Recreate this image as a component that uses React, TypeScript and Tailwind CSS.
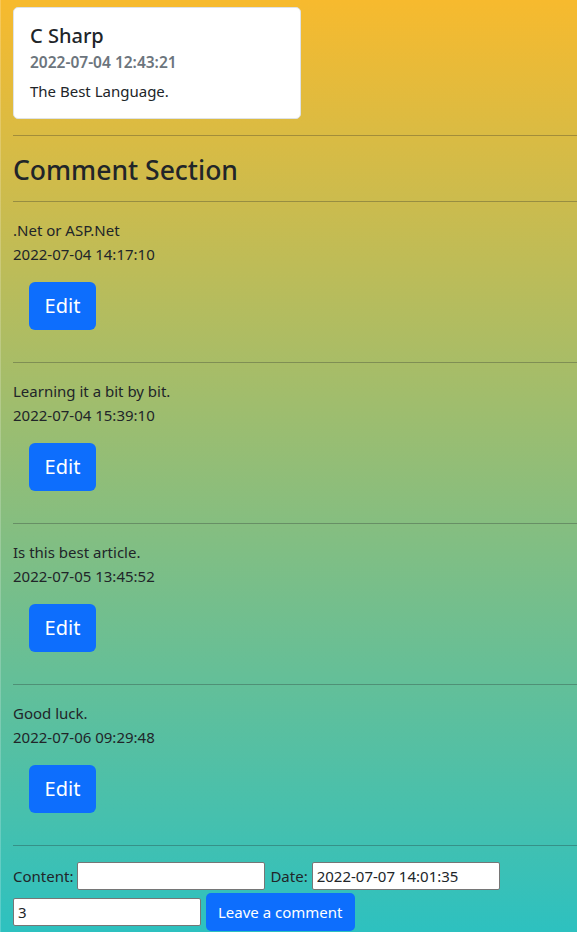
import React from 'react';

const comments = [
  { text: '.Net or ASP.Net', date: '2022-07-04 14:17:10' },
  { text: 'Learning it a bit by bit.', date: '2022-07-04 15:39:10' },
  { text: 'Is this best article.', date: '2022-07-05 13:45:52' },
  { text: 'Good luck.', date: '2022-07-06 09:29:48' },
];

function Rule() {
  return <hr className="border-0 border-t border-[#212529]/30 my-0" />;
}

export default function App() {
  return (
    <div
      className="min-h-screen w-full bg-linear-to-b/srgb from-[#f7ba2e] to-[#2ac1c2] text-[#212529] pl-[12px] pb-4 text-[15px] leading-6 border-l border-white/20"
      style={{ fontFamily: '"Noto Sans", "Open Sans", sans-serif' }}
    >
      <div className="pt-[7px] pb-4">
        <div className="w-[288px] bg-white border border-[#dee2e6] rounded-[5px] px-4 pt-4 pb-[15px]">
          <h5 className="text-[20px] font-medium leading-6">C Sharp</h5>
          <h6 className="mt-[2px] text-[15.5px] font-semibold leading-6 text-[#6c757d]">2022-07-04 12:43:21</h6>
          <p className="mt-[5px] text-[15px] leading-6">The Best Language.</p>
        </div>
      </div>

      <Rule />
      <h2 className="text-[26.5px] font-medium leading-8 pt-[18px] pb-[15px]">Comment Section</h2>
      <Rule />

      {comments.map((c) => (
        <div key={c.date}>
          <div className="pt-4">
            <p>{c.text}</p>
            <p>{c.date}</p>
          </div>
          <div className="pt-4 pb-8 pl-4">
            <button className="w-[67px] h-12 rounded-[6px] bg-[#0d6efd] text-white text-[20px]">Edit</button>
          </div>
          <Rule />
        </div>
      ))}

      <form className="pt-4 flex flex-wrap items-center gap-x-[5px] gap-y-[3px] pr-[60px]">
        <label className="flex items-center gap-1">
          Content:
          <input className="w-[188px] h-7 bg-white border border-[#767676] rounded-[2px] px-1 text-[15px]" />
        </label>
        <label className="flex items-center gap-1">
          Date:
          <input
            className="w-[188px] h-7 bg-white border border-[#767676] rounded-[2px] px-1 text-[15px]"
            defaultValue="2022-07-07 14:01:35"
          />
        </label>
        <input
          className="w-[188px] h-7 bg-white border border-[#767676] rounded-[2px] px-1 text-[15px]"
          defaultValue="3"
        />
        <button type="button" className="h-[38px] px-3 rounded-[5px] bg-[#0d6efd] text-white text-[15px]">
          Leave a comment
        </button>
      </form>
    </div>
  );
}
